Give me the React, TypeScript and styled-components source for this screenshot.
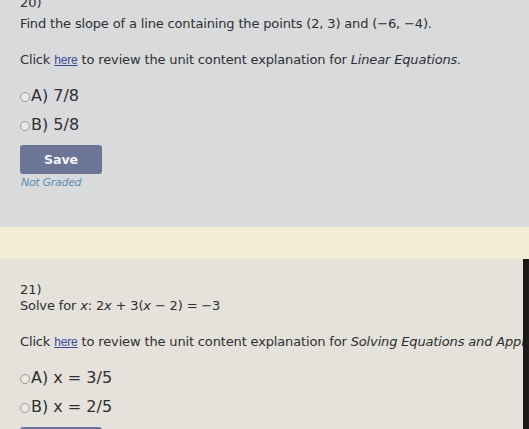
import React from "react";
import styled, { createGlobalStyle } from "styled-components";

const GlobalStyle = createGlobalStyle`
  html, body {
    margin: 0;
    padding: 0;
    background: #d9dadb;
  }
  body {
    font-family: "DejaVu Sans", Verdana, sans-serif;
    color: #2e2f33;
  }
`;

const Page = styled.div`
  width: 529px;
  height: 429px;
  overflow: hidden;
  display: flex;
  flex-direction: column;
`;

const Section = styled.section<{ $bg: string; $edge?: boolean }>`
  background: ${(p) => p.$bg};
  padding: ${(p) => (p.$edge ? "23px 0 0 20px" : "0 0 0 20px")};
  border-right: ${(p) => (p.$edge ? "6px solid #1b1b1c" : "none")};
  overflow: hidden;
  white-space: nowrap;
`;

const TopSection = styled(Section)`
  height: 227px;
  box-sizing: border-box;
`;

const BottomSection = styled(Section)`
  flex: 1;
`;

const Band = styled.div`
  height: 32px;
  background: #f2edd5;
`;

const Number = styled.div<{ $cut?: boolean }>`
  font-size: 13px;
  line-height: 16px;
  margin-top: ${(p) => (p.$cut ? "-5px" : "0")};
  margin-bottom: ${(p) => (p.$cut ? "5px" : "0")};
`;

const Prompt = styled.div`
  font-size: 13px;
  line-height: 16px;
  letter-spacing: -0.15px;
`;

const Review = styled.div`
  font-size: 13px;
  line-height: 16px;
  margin-top: 20px;
  letter-spacing: -0.15px;
`;

const Link = styled.a`
  color: #3a4a98;
  text-decoration: underline;
  font-family: "Liberation Sans", Arial, sans-serif;
  font-size: 12px;
`;

const Options = styled.div`
  margin-top: 18px;
  display: flex;
  flex-direction: column;
  gap: 9px;
`;

const Option = styled.label`
  display: flex;
  align-items: center;
  font-size: 16px;
  line-height: 20px;
`;

const Radio = styled.span`
  width: 8px;
  height: 8px;
  border-radius: 50%;
  border: 1px solid #9a9b98;
  background: #e9e9e4;
  margin-right: 1px;
  margin-top: 1px;
`;

const SaveButton = styled.button`
  margin-top: 10px;
  width: 82px;
  height: 29px;
  border: none;
  border-radius: 3px;
  background: #6c7596;
  color: #f4f5f8;
  font-family: "DejaVu Sans", Verdana, sans-serif;
  font-weight: bold;
  font-size: 12.5px;
  display: block;
`;

const Status = styled.div`
  font-style: italic;
  font-size: 11px;
  line-height: 16px;
  color: #5a8eb6;
  margin-top: 1px;
  margin-left: 1px;
  letter-spacing: -0.3px;
`;

const Var = styled.i``;

export default function App() {
  return (
    <>
      <GlobalStyle />
      <Page>
        <TopSection $bg="#d9dadb">
          <Number $cut>20)</Number>
          <Prompt>Find the slope of a line containing the points (2, 3) and (−6, −4).</Prompt>
          <Review>
            Click <Link href="#">here</Link> to review the unit content explanation for{" "}
            <i>Linear Equations.</i>
          </Review>
          <Options>
            <Option>
              <Radio />
              A) 7/8
            </Option>
            <Option>
              <Radio />
              B) 5/8
            </Option>
          </Options>
          <SaveButton>Save</SaveButton>
          <Status>Not Graded</Status>
        </TopSection>
        <Band />
        <BottomSection $bg="#e4e2da" $edge>
          <Number>21)</Number>
          <Prompt>
            Solve for <Var>x</Var>: 2<Var>x</Var> + 3(<Var>x</Var> − 2) = −3
          </Prompt>
          <Review>
            Click <Link href="#">here</Link> to review the unit content explanation for{" "}
            <i>Solving Equations and Applications</i>
          </Review>
          <Options>
            <Option>
              <Radio />
              A) x = 3/5
            </Option>
            <Option>
              <Radio />
              B) x = 2/5
            </Option>
          </Options>
          <SaveButton>Save</SaveButton>
        </BottomSection>
      </Page>
    </>
  );
}
